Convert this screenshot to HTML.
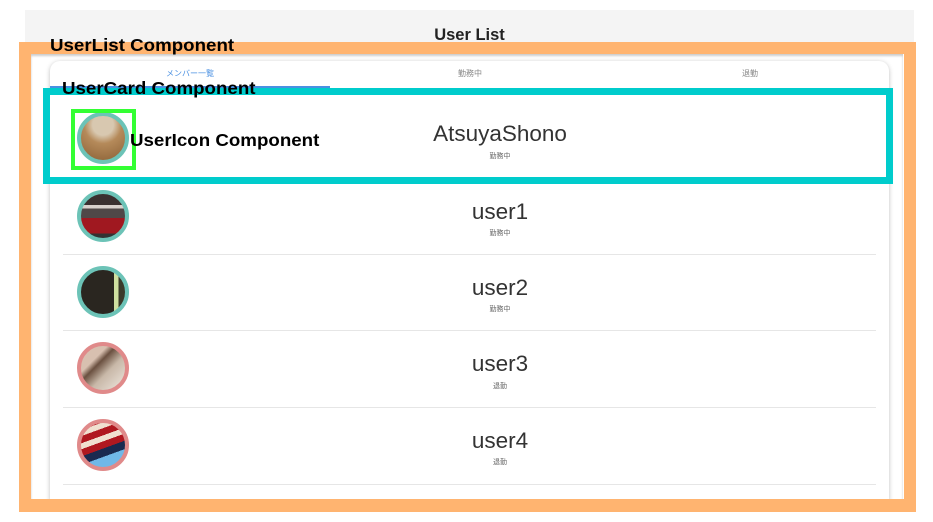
<!DOCTYPE html>
<html><head><meta charset="utf-8"><style>
*{margin:0;padding:0;box-sizing:border-box}
body{width:933px;height:522px;background:#fff;position:relative;overflow:hidden;font-family:"Liberation Sans","Noto Sans CJK JP",sans-serif}
.abs{position:absolute}
.hdr{left:25px;top:10px;width:889px;height:34px;background:#f4f4f4}
.title{left:0;width:939px;top:26px;text-align:center;font-weight:bold;font-size:16.5px;color:#222}
.orange{left:19px;top:42px;width:897px;height:470px;border:12px solid #ffb470;border-bottom-width:13px}
.inner{left:31px;top:54px;width:872px;height:445px;background:#fff;box-shadow:inset 0 2px 2px #ccc}
.card{left:50px;top:61px;width:839px;height:440px;background:#fff;border-radius:10px 10px 0 0;box-shadow:0 1px 5px rgba(0,0,0,.25)}
.tab{top:68px;font-size:8px;color:#888;width:280px;text-align:center}
.uline{left:50px;top:86px;width:280px;height:2px;background:#4a90e2}
.av{width:52px;height:52px;border-radius:50%;border:4px solid #6cc3b7;left:77px}
.name{left:300px;width:400px;text-align:center;font-size:22.5px;color:#333}
.st{left:300px;width:400px;text-align:center;font-size:7px;color:#666}
.div{left:63px;width:813px;height:1px;background:#e6e6e6}
.lbl{font-weight:bold;font-size:17.5px;color:#000;white-space:nowrap;transform:scaleX(1.07);transform-origin:left}
</style></head><body>
<div class="abs hdr"></div>
<div class="abs title">User List</div>
<div class="abs inner"></div>
<div class="abs card"></div>
<div class="abs orange"></div>
<div class="abs tab" style="left:50px;color:#4a90e2">メンバー一覧</div>
<div class="abs tab" style="left:330px">勤務中</div>
<div class="abs tab" style="left:610px">退勤</div>
<div class="abs uline"></div>

<div class="abs av" style="top:112px;background:radial-gradient(circle at 50% 20%,#d8c8b0 0 25%,#b58a5a 45%,#8a6035 100%)"></div>
<div class="abs name" style="top:121px">AtsuyaShono</div>
<div class="abs st" style="top:151px">勤務中</div>

<div class="abs av" style="top:190px;background:linear-gradient(#3a3030 0 25%,#d8d0cc 25% 33%,#504848 33% 55%,#a01820 55% 90%,#333 90%)"></div>
<div class="abs name" style="top:199px">user1</div>
<div class="abs st" style="top:228px">勤務中</div>
<div class="abs div" style="top:254px"></div>

<div class="abs av" style="top:266px;background:linear-gradient(90deg,#2a2620 0 75%,#cfe0a0 75% 85%,#3a3a2a 85%)"></div>
<div class="abs name" style="top:275px">user2</div>
<div class="abs st" style="top:304px">勤務中</div>
<div class="abs div" style="top:330px"></div>

<div class="abs av" style="top:342px;border-color:#e08a8a;background:linear-gradient(135deg,#d8c0b0 0 30%,#6a5040 40%,#c8b8a8 60%,#f0e8e0 100%)"></div>
<div class="abs name" style="top:351px">user3</div>
<div class="abs st" style="top:381px">退勤</div>
<div class="abs div" style="top:407px"></div>

<div class="abs av" style="top:419px;border-color:#e08a8a;background:linear-gradient(160deg,#b01820 0 12%,#f0e0d0 12% 22%,#b01820 22% 34%,#f0e0d0 34% 44%,#b01820 44% 56%,#1a2a50 56% 70%,#70b8e8 70%)"></div>
<div class="abs name" style="top:428px">user4</div>
<div class="abs st" style="top:457px">退勤</div>
<div class="abs div" style="top:484px"></div>

<div class="abs" style="left:43px;top:88px;width:850px;height:96px;border:7px solid #00cccc"></div>
<div class="abs" style="left:71px;top:109px;width:65px;height:61px;border:4px solid #33ff33"></div>
<div class="abs lbl" style="left:50px;top:35px">UserList Component</div>
<div class="abs lbl" style="left:62px;top:78px">UserCard Component</div>
<div class="abs lbl" style="left:130px;top:130px">UserIcon Component</div>
</body></html>
